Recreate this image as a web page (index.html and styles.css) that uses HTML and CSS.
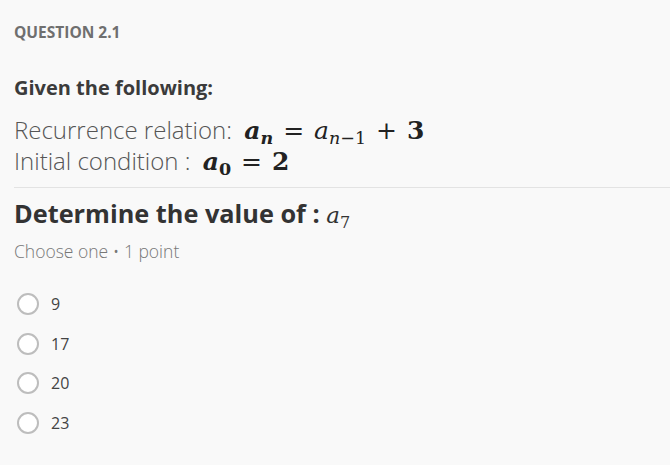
FILE: index.html
```html
<!DOCTYPE html>
<html>
<head>
<meta charset="utf-8">
<link rel="stylesheet" href="styles.css">
</head>
<body>
<div class="page">
  <div class="qnum">QUESTION 2.1</div>
  <div class="given">Given the following:</div>
  <div class="defs">
    <div class="line">Recurrence relation: <span class="math"><b><i>a</i><sub><i>n</i></sub></b><span class="op">=</span><i>a</i><sub><i>n</i>−1</sub><span class="op">+</span><b>3</b></span></div>
    <div class="line">Initial condition : <span class="math"><b><i>a</i><sub>0</sub></b><span class="op">=</span><b>2</b></span></div>
  </div>
  <hr class="divider">
  <div class="prompt">Determine the value of : <span class="math m2"><i>a</i><sub>7</sub></span></div>
  <div class="meta">Choose one • 1 point</div>
  <div class="options">
    <label class="opt"><span class="radio"></span><span class="lbl">9</span></label>
    <label class="opt"><span class="radio"></span><span class="lbl">17</span></label>
    <label class="opt"><span class="radio"></span><span class="lbl">20</span></label>
    <label class="opt"><span class="radio"></span><span class="lbl">23</span></label>
  </div>
</div>
</body>
</html>
```
FILE: styles.css
```css
html, body { margin: 0; padding: 0; background: #f9f9f9; }
body { font-family: "Open Sans", sans-serif; width: 670px; height: 465px; overflow: hidden; }
.page { padding: 21px 0 0 14px; }
.qnum { font-size: 15.5px; font-weight: 700; color: #6f6f6f; line-height: 22px; }
.given { margin-top: 32px; font-size: 20px; font-weight: 700; color: #3b3b3b; line-height: 26px; }
.defs { margin-top: 14px; }
.line { font-size: 24px; font-weight: 300; color: #555; line-height: 30px; white-space: nowrap; }
.math { font-family: "DejaVu Serif", serif; font-size: 25px; color: #222; font-weight: 400; margin-left: 6px; }
.math i { font-style: italic; }
.math b { font-weight: 700; }
.math sub { font-size: 0.7em; vertical-align: -0.3em; line-height: 0; }
.op { margin: 0 10px; }
.divider { border: none; border-top: 1px solid #e3e3e3; margin: 10px 0 0 0; height: 0; }
.prompt { margin-top: 9px; font-size: 25.3px; font-weight: 700; color: #333; line-height: 32px; }
.m2 { font-size: 23px; font-weight: 400; color: #333; margin-left: 0; }
.meta { margin-top: 8px; font-size: 17.5px; font-weight: 300; color: #777; line-height: 24px; }
.options { margin-top: 30px; display: flex; flex-direction: column; gap: 17.7px; }
.opt { display: flex; align-items: center; gap: 12px; height: 22px; padding-left: 3px; }
.radio { width: 18px; height: 18px; border: 2px solid #bdbdbd; border-radius: 50%; box-sizing: content-box; background: #fff; }
.lbl { font-size: 16px; color: #444; }
```
